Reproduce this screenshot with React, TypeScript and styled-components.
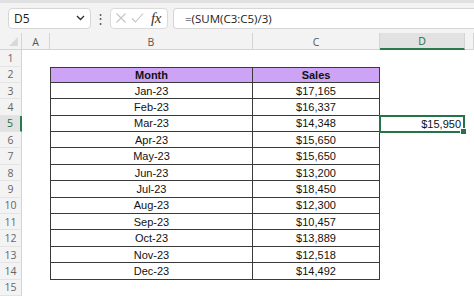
import React from "react";
import styled, { createGlobalStyle } from "styled-components";

const Global = createGlobalStyle`
  html, body { margin: 0; padding: 0; background: #ffffff; }
  body { width: 474px; height: 296px; overflow: hidden; }
  * { box-sizing: border-box; }
`;

const Page = styled.div`
  width: 474px;
  height: 296px;
  overflow: hidden;
  background: #fff;
  display: flex;
  flex-direction: column;
`;

const TopStrip = styled.div`
  height: 3px;
  background: #e1e1e1;
`;

const Toolbar = styled.div`
  height: 31px;
  background: #f3f3f3;
  display: flex;
  align-items: flex-start;
  padding: 5px 0 0 8px;
  font-family: "Open Sans", "Noto Sans", sans-serif;
`;

const NameBox = styled.div`
  width: 83px;
  height: 21px;
  background: #fff;
  border: 1px solid #d6d6d6;
  border-radius: 4px;
  display: flex;
  align-items: center;
  justify-content: space-between;
  padding: 0 5px 0 5px;
  font-size: 12px;
  color: #222;
`;

const Dots = styled.div`
  width: 19px;
  height: 21px;
  display: flex;
  align-items: center;
  justify-content: center;
  color: #555;
  font-size: 13px;
`;

const IconBox = styled.div`
  width: 58px;
  height: 21px;
  background: #fff;
  border: 1px solid #dadada;
  border-radius: 4px;
  display: flex;
  align-items: center;
  padding: 0 0 0 4px;
  gap: 4px;
`;

const Fx = styled.span`
  font-family: "Liberation Serif", "DejaVu Serif", serif;
  font-style: italic;
  font-size: 15px;
  color: #333;
  margin-left: 3px;
  letter-spacing: -0.5px;
`;

const FormulaBox = styled.div`
  flex: 1;
  margin-left: 5px;
  height: 21px;
  background: #fff;
  border: 1px solid #d6d6d6;
  border-right: none;
  border-radius: 4px 0 0 4px;
  display: flex;
  align-items: center;
  padding-left: 11px;
  font-size: 11.5px;
  color: #222;
`;

const Sheet = styled.div`
  display: grid;
  grid-template-columns: 22px 28px 203px 127px 85px 1fr;
  grid-template-rows: 17px repeat(15, 16.4px);
  flex: 1;
`;

const Corner = styled.div`
  grid-column: 1;
  grid-row: 1;
  background: #f3f3f3;
  border-right: 1px solid #d4d4d4;
  border-bottom: 1px solid #d4d4d4;
  position: relative;
  &::after {
    content: "";
    position: absolute;
    right: 3px;
    bottom: 3px;
    width: 0;
    height: 0;
    border-left: 9px solid transparent;
    border-bottom: 9px solid #d9d9d9;
  }
`;

const ColHead = styled.div<{ $col: number; $active?: boolean }>`
  grid-column: ${(p) => p.$col};
  grid-row: 1;
  background: ${(p) => (p.$active ? "#e2e2e2" : "#f3f3f3")};
  border-right: 1px solid #d4d4d4;
  border-bottom: ${(p) => (p.$active ? "2px solid #2b7a4b" : "1px solid #d4d4d4")};
  display: flex;
  align-items: center;
  justify-content: center;
  font-family: "Open Sans", "Noto Sans", sans-serif;
  font-size: 10.5px;
  color: ${(p) => (p.$active ? "#1e6b3f" : "#555")};
  padding-top: 1px;
`;

const RowHead = styled.div<{ $row: number; $active?: boolean }>`
  grid-column: 1;
  grid-row: ${(p) => p.$row + 1};
  background: ${(p) => (p.$active ? "#e2e2e2" : "#f3f3f3")};
  border-right: ${(p) => (p.$active ? "2px solid #2b7a4b" : "1px solid #d4d4d4")};
  border-bottom: 1px solid #e4e4e4;
  display: flex;
  align-items: center;
  justify-content: center;
  font-family: "Open Sans", "Noto Sans", sans-serif;
  font-size: 10.5px;
  color: ${(p) => (p.$active ? "#1e6b3f" : "#666")};
`;

const Table = styled.div`
  grid-column: 3 / 5;
  grid-row: 3 / 16;
  display: grid;
  grid-template-columns: 203px 127px;
  grid-template-rows: repeat(13, 16.4px);
`;

const Cell = styled.div<{ $head?: boolean; $first?: boolean; $left?: boolean }>`
  background: ${(p) => (p.$head ? "#cca3f5" : "#fff")};
  border-right: 1px solid #3a3a3a;
  border-bottom: 1px solid #3a3a3a;
  border-top: ${(p) => (p.$first ? "1px solid #3a3a3a" : "none")};
  border-left: ${(p) => (p.$left ? "1px solid #3a3a3a" : "none")};
  display: flex;
  align-items: center;
  justify-content: center;
  font-family: "Liberation Sans", Arial, sans-serif;
  font-size: 11px;
  font-weight: ${(p) => (p.$head ? 700 : 400)};
  color: #111;
  white-space: nowrap;
`;

const Selected = styled.div`
  grid-column: 5;
  grid-row: 6;
  border: 2px solid #237446;
  margin: -1px 0 -1px -1px;
  display: flex;
  align-items: center;
  justify-content: flex-end;
  padding-right: 2px;
  font-family: "Liberation Sans", Arial, sans-serif;
  font-size: 11px;
  color: #111;
  position: relative;
  &::after {
    content: "";
    position: absolute;
    right: -4px;
    bottom: -4px;
    width: 5px;
    height: 5px;
    background: #237446;
    border: 1px solid #fff;
  }
`;

const data: [string, string][] = [
  ["Jan-23", "$17,165"],
  ["Feb-23", "$16,337"],
  ["Mar-23", "$14,348"],
  ["Apr-23", "$15,650"],
  ["May-23", "$15,650"],
  ["Jun-23", "$13,200"],
  ["Jul-23", "$18,450"],
  ["Aug-23", "$12,300"],
  ["Sep-23", "$10,457"],
  ["Oct-23", "$13,889"],
  ["Nov-23", "$12,518"],
  ["Dec-23", "$14,492"],
];

const Chevron = () => (
  <svg width="9" height="6" viewBox="0 0 9 6">
    <path d="M1 1 L4.5 4.5 L8 1" fill="none" stroke="#333" strokeWidth="1.4" />
  </svg>
);

const Cross = () => (
  <svg width="12" height="12" viewBox="0 0 12 12">
    <path d="M1.5 1.5 L10.5 10.5 M10.5 1.5 L1.5 10.5" stroke="#c4c4c4" strokeWidth="1.1" fill="none" />
  </svg>
);

const Check = () => (
  <svg width="13" height="12" viewBox="0 0 13 12">
    <path d="M1 6.5 L4.5 10 L12 1.5" stroke="#c4c4c4" strokeWidth="1.1" fill="none" />
  </svg>
);

export default function App() {
  const cols = ["A", "B", "C", "D", ""];
  return (
    <Page>
      <Global />
      <TopStrip />
      <Toolbar>
        <NameBox>
          <span>D5</span>
          <Chevron />
        </NameBox>
        <Dots>⋮</Dots>
        <IconBox>
          <Cross />
          <Check />
          <Fx>fx</Fx>
        </IconBox>
        <FormulaBox>=(SUM(C3:C5)/3)</FormulaBox>
      </Toolbar>
      <Sheet>
        <Corner />
        {cols.map((c, i) => (
          <ColHead key={i} $col={i + 2} $active={c === "D"}>
            {c}
          </ColHead>
        ))}
        {Array.from({ length: 15 }, (_, i) => (
          <RowHead key={i} $row={i + 1} $active={i + 1 === 5}>
            {i + 1}
          </RowHead>
        ))}
        <Table>
          <Cell $head $first $left>Month</Cell>
          <Cell $head $first>Sales</Cell>
          {data.map(([m, s]) => (
            <React.Fragment key={m}>
              <Cell $left>{m}</Cell>
              <Cell>{s}</Cell>
            </React.Fragment>
          ))}
        </Table>
        <Selected>$15,950</Selected>
      </Sheet>
    </Page>
  );
}
